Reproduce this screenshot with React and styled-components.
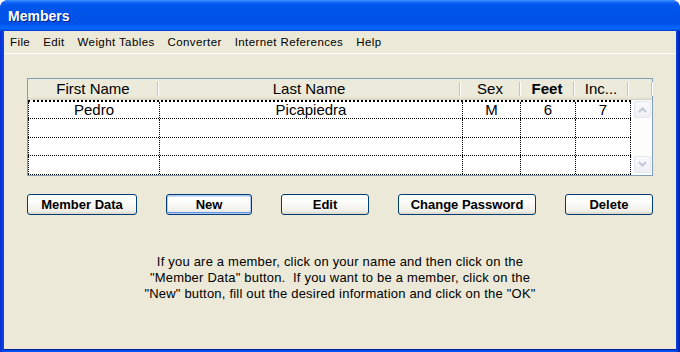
import React from "react";
import styled, { createGlobalStyle } from "styled-components";

const Global = createGlobalStyle`
  html, body { margin: 0; padding: 0; background: #fff; }
  body { width: 680px; height: 352px; overflow: hidden; }
`;

const Window = styled.div`
  width: 680px;
  height: 352px;
  box-sizing: border-box;
  display: flex;
  flex-direction: column;
  border-radius: 8px 8px 0 0;
  background: linear-gradient(to right, #0831d9 0, #0841e0 3px, #0050ee 4px, #0050ee calc(100% - 4px), #0535d8 calc(100% - 3px), #001ea0 100%);
  overflow: hidden;
`;

const TitleBar = styled.div`
  height: 31px;
  flex: none;
  display: flex;
  align-items: center;
  padding-left: 8px;
  border-radius: 8px 8px 0 0;
  background: linear-gradient(to bottom, #3d95ff 0, #0a5ff4 3px, #0055ea 6px, #0153e8 45%, #0050e6 75%, #0565ff 88%, #0a66ff 93%, #004ce0 97%, #003dd7 100%);
  color: #fff;
  font-family: "Liberation Sans", Arial, sans-serif;
  font-weight: bold;
  font-size: 14px;
  text-shadow: 1px 1px 0 #0a1f88;
`;

const Client = styled.div`
  flex: 1;
  margin: 0 4px 3px 4px;
  background: #ece9d8;
  display: flex;
  flex-direction: column;
  box-shadow: 0 1px 0 #001a9a;
`;

const MenuBar = styled.div`
  height: 22px;
  display: flex;
  align-items: center;
  border-bottom: 1px solid #ffffff;
  font-family: "Liberation Sans", Arial, sans-serif;
  font-size: 11.5px;
  letter-spacing: 0.4px;
  color: #000;
`;

const MenuItem = styled.span`
  padding: 0 6.5px 0 ${(p) => (p.first ? "6px" : "6.5px")};
  line-height: 22px;
`;

const Body = styled.div`
  flex: 1;
  display: flex;
  flex-direction: column;
  padding: 24px 23px 0 23px;
`;

const ListView = styled.div`
  border: 1px solid #7f9db9;
  background: #fff;
  display: flex;
  flex-direction: column;
  font-family: "Liberation Sans", Arial, sans-serif;
  font-size: 15px;
  color: #000;
`;

const Header = styled.div`
  display: grid;
  grid-template-columns: 130px 302px 60px 54px 54px 1fr;
  height: 20px;
  background: linear-gradient(to bottom, #ebeadb 0, #ebeadb 85%, #e2e0d0 100%);
  border-bottom: 1px solid #d6d3c2;
`;

const HeadCell = styled.div`
  position: relative;
  text-align: center;
  line-height: 20px;
  font-weight: ${(p) => (p.bold ? "bold" : "normal")};
  &::after {
    content: "";
    position: absolute;
    right: 0;
    top: 3px;
    bottom: 3px;
    width: 1px;
    background: #c7c5b2;
    box-shadow: 1px 0 0 #fff;
  }
`;

const ListBody = styled.div`
  display: flex;
`;

const Rows = styled.div`
  width: 603px;
  display: flex;
  flex-direction: column;
`;

const Row = styled.div`
  display: grid;
  grid-template-columns: 132px 303px 58px 55px 55px;
  height: 18.5px;
  box-sizing: border-box;
  border-bottom: 1px dotted #000;
  ${(p) => (p.focused ? "border-top: 2px dotted #000; height: 19px;" : "")}
`;

const Cell = styled.div`
  text-align: center;
  line-height: 16px;
  border-right: 1px dotted #000;
  ${(p) => (p.first ? "border-left: 1px dotted #000;" : "")}
  overflow: hidden;
`;

const ScrollBar = styled.div`
  flex: 1;
  display: flex;
  flex-direction: column;
  justify-content: space-between;
  align-items: center;
  padding: 1px 0 2px 1px;
  background: #fdfdfb;
`;

const ScrollBtn = styled.div`
  width: 17px;
  height: 17px;
  box-sizing: border-box;
  border: 1px solid #e3e7ef;
  border-radius: 2px;
  background: linear-gradient(to bottom, #f9fafc, #eef0f4);
  display: flex;
  align-items: center;
  justify-content: center;
`;

const ButtonRow = styled.div`
  display: flex;
  justify-content: space-between;
  margin-top: 18px;
`;

const Button = styled.button`
  width: ${(p) => p.w}px;
  height: 21px;
  box-sizing: border-box;
  padding: 0;
  border: 1px solid #003c74;
  border-radius: 3px;
  background: linear-gradient(to bottom, #ffffff 0, #fbfbf9 40%, #f0efe8 85%, #d8d5c6 100%);
  font-family: "Liberation Sans", Arial, sans-serif;
  font-weight: bold;
  font-size: 13px;
  color: #000;
  ${(p) =>
    p.isDefault
      ? "box-shadow: inset 0 0 0 1px #aecbf5, inset 0 -1px 0 1px #6b95e0, inset 0 1px 0 1px #cee0fa;"
      : ""}
`;

const Note = styled.p`
  margin: 39px 0 0 0;
  text-align: center;
  font-family: "Liberation Sans", Arial, sans-serif;
  font-size: 13px;
  letter-spacing: 0.2px;
  line-height: 16px;
  color: #000;
  white-space: pre;
`;

const Chevron = ({ up }) => (
  <svg width="9" height="6" viewBox="0 0 9 6">
    <path
      d={up ? "M1 5 L4.5 1.5 L8 5" : "M1 1 L4.5 4.5 L8 1"}
      fill="none"
      stroke="#c2c9d6"
      strokeWidth="2"
    />
  </svg>
);

const rows = [
  ["Pedro", "Picapiedra", "M", "6", "7"],
  ["", "", "", "", ""],
  ["", "", "", "", ""],
  ["", "", "", "", ""],
];

export default function App() {
  return (
    <>
      <Global />
      <Window>
        <TitleBar>Members</TitleBar>
        <Client>
          <MenuBar>
            <MenuItem first>File</MenuItem>
            <MenuItem>Edit</MenuItem>
            <MenuItem>Weight Tables</MenuItem>
            <MenuItem>Converter</MenuItem>
            <MenuItem>Internet References</MenuItem>
            <MenuItem>Help</MenuItem>
          </MenuBar>
          <Body>
            <ListView>
              <Header>
                <HeadCell>First Name</HeadCell>
                <HeadCell>Last Name</HeadCell>
                <HeadCell>Sex</HeadCell>
                <HeadCell bold>Feet</HeadCell>
                <HeadCell>Inc...</HeadCell>
                <HeadCell />
              </Header>
              <ListBody>
                <Rows>
                  {rows.map((r, i) => (
                    <Row key={i} focused={i === 0}>
                      {r.map((c, j) => (
                        <Cell key={j} first={j === 0}>
                          {c}
                        </Cell>
                      ))}
                    </Row>
                  ))}
                </Rows>
                <ScrollBar>
                  <ScrollBtn>
                    <Chevron up />
                  </ScrollBtn>
                  <ScrollBtn>
                    <Chevron />
                  </ScrollBtn>
                </ScrollBar>
              </ListBody>
            </ListView>
            <ButtonRow>
              <Button w={110}>Member Data</Button>
              <Button w={86} isDefault>New</Button>
              <Button w={88}>Edit</Button>
              <Button w={138}>Change Password</Button>
              <Button w={88}>Delete</Button>
            </ButtonRow>
            <Note>
              {"If you are a member, click on your name and then click on the\n\"Member Data\" button.  If you want to be a member, click on the\n\"New\" button, fill out the desired information and click on the \"OK\""}
            </Note>
          </Body>
        </Client>
      </Window>
    </>
  );
}
